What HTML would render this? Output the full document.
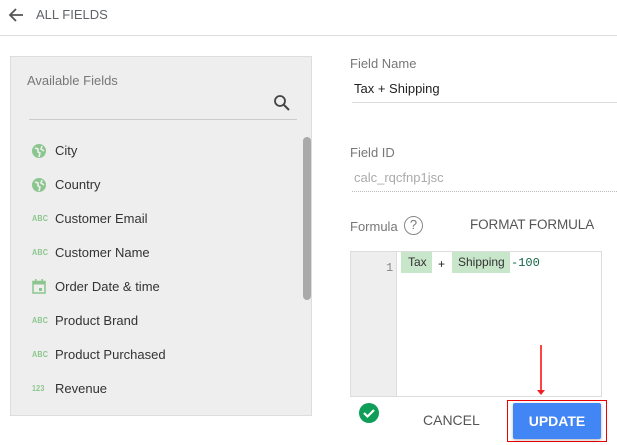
<!DOCTYPE html>
<html><head><meta charset="utf-8"><style>
*{margin:0;padding:0;box-sizing:border-box}
body{width:617px;height:445px;background:#fff;font-family:"Liberation Sans",sans-serif;position:relative;overflow:hidden}
.a{position:absolute;white-space:nowrap}
.it{position:absolute;left:55px;font-size:13px;color:#333}
.ic{position:absolute;left:32px}
.abc{position:absolute;left:32px;font-size:8px;font-weight:bold;color:#8cc68f;letter-spacing:0.2px;transform:scaleX(0.9);transform-origin:left}
</style></head><body>
<svg class="a" style="left:7px;top:6px" width="18" height="18" viewBox="0 0 18 18"><path d="M16 9H3M9 3L3 9l6 6" fill="none" stroke="#555" stroke-width="1.8"/></svg>
<div class="a" style="left:36px;top:7px;font-size:13px;color:#5f6368">ALL FIELDS</div>
<div class="a" style="left:0;top:35px;width:617px;height:1px;background:#ddd"></div>

<div class="a" style="left:10px;top:56px;width:302px;height:360px;background:#eee;border:1px solid #ddd"></div>
<div class="a" style="left:27px;top:73px;font-size:13px;color:#777">Available Fields</div>
<svg class="a" style="left:273px;top:94px" width="18" height="18" viewBox="0 0 18 18"><circle cx="7" cy="7" r="5" fill="none" stroke="#444" stroke-width="1.8"/><path d="M11 11l5 5" stroke="#444" stroke-width="2"/></svg>
<div class="a" style="left:29px;top:119px;width:268px;height:1px;background:#ccc"></div>
<div class="a" style="left:303px;top:137px;width:8px;height:163px;background:#aaa;border-radius:4px"></div>

<svg class="ic" style="top:144px" width="14" height="14" viewBox="0 0 14 14"><circle cx="7" cy="7" r="7" fill="#8cc68f"/><path d="M3 4l3 1 0 3 2 1-1 4M10 2l-1 3 3 2" stroke="#eee" stroke-width="1.6" fill="none"/></svg>
<div class="it" style="top:143px">City</div>
<svg class="ic" style="top:178px" width="14" height="14" viewBox="0 0 14 14"><circle cx="7" cy="7" r="7" fill="#8cc68f"/><path d="M3 4l3 1 0 3 2 1-1 4M10 2l-1 3 3 2" stroke="#eee" stroke-width="1.6" fill="none"/></svg>
<div class="it" style="top:177px">Country</div>
<div class="abc" style="top:214px">ABC</div><div class="it" style="top:211px">Customer Email</div>
<div class="abc" style="top:248px">ABC</div><div class="it" style="top:245px">Customer Name</div>
<svg class="ic" style="top:279px" width="14" height="15" viewBox="0 0 14 15"><rect x="1" y="2.5" width="12" height="11.5" fill="none" stroke="#8cc68f" stroke-width="1.5"/><rect x="1" y="2.5" width="12" height="3" fill="#8cc68f"/><rect x="3" y="0" width="1.5" height="3" fill="#8cc68f"/><rect x="9.5" y="0" width="1.5" height="3" fill="#8cc68f"/><rect x="7" y="9" width="3" height="3" fill="#8cc68f"/></svg>
<div class="it" style="top:279px">Order Date &amp; time</div>
<div class="abc" style="top:316px">ABC</div><div class="it" style="top:313px">Product Brand</div>
<div class="abc" style="top:350px">ABC</div><div class="it" style="top:347px">Product Purchased</div>
<div class="abc" style="top:384px">123</div><div class="it" style="top:381px">Revenue</div>

<div class="a" style="left:350px;top:56px;font-size:13px;color:#777">Field Name</div>
<div class="a" style="left:354px;top:81px;font-size:13px;color:#222">Tax + Shipping</div>
<div class="a" style="left:352px;top:102px;width:265px;height:1px;background:#ddd"></div>
<div class="a" style="left:350px;top:145px;font-size:13px;color:#777">Field ID</div>
<div class="a" style="left:354px;top:170px;font-size:13px;color:#aaa">calc_rqcfnp1jsc</div>
<div class="a" style="left:352px;top:191px;width:265px;border-top:1px dotted #bbb"></div>

<div class="a" style="left:350px;top:219px;font-size:13px;color:#777">Formula</div>
<div class="a" style="left:404px;top:216px;width:19px;height:19px;border:1.5px solid #888;border-radius:50%;font-size:13px;color:#777;text-align:center;line-height:16px">?</div>
<div class="a" style="left:470px;top:217px;font-size:13.5px;color:#555;letter-spacing:-0.1px">FORMAT FORMULA</div>

<div class="a" style="left:350px;top:251px;width:252px;height:146px;border:1px solid #ddd;background:#fff"></div>
<div class="a" style="left:351px;top:252px;width:46px;height:144px;background:#eee;border-right:1px solid #ddd"></div>
<div class="a" style="left:386px;top:261px;font-size:12px;color:#888;font-family:'Liberation Mono',monospace">1</div>
<div class="a" style="left:401px;top:252px;width:31px;height:21px;background:#c8e6c9"></div>
<div class="a" style="left:408px;top:255px;font-size:12px;color:#333">Tax</div>
<div class="a" style="left:438px;top:257px;font-size:12px;color:#222">+</div>
<div class="a" style="left:452px;top:252px;width:58px;height:21px;background:#c8e6c9"></div>
<div class="a" style="left:458px;top:255px;font-size:12px;color:#333">Shipping</div>
<div class="a" style="left:511px;top:256px;font-size:12px;color:#164;font-family:'Liberation Mono',monospace">-100</div>

<div class="a" style="left:540px;top:345px;width:2px;height:47px;background:#f44"></div>
<div class="a" style="left:537px;top:390px;width:0;height:0;border-left:4px solid transparent;border-right:4px solid transparent;border-top:5px solid #e22"></div>

<svg class="a" style="left:359px;top:403px" width="20" height="20" viewBox="0 0 20 20"><circle cx="10" cy="10" r="10" fill="#0f9d58"/><path d="M5 10l3.5 3.5L15 7" stroke="#fff" stroke-width="2.2" fill="none"/></svg>
<div class="a" style="left:423px;top:412px;font-size:14px;color:#555">CANCEL</div>
<div class="a" style="left:507px;top:400px;width:100px;height:42px;border:1px solid #e00"></div>
<div class="a" style="left:513px;top:403px;width:88px;height:36px;background:#4285f4;border-radius:2px;box-shadow:0 1px 3px rgba(0,0,0,.3);color:#fff;font-weight:bold;font-size:14px;text-align:center;line-height:36px">UPDATE</div>
</body></html>
